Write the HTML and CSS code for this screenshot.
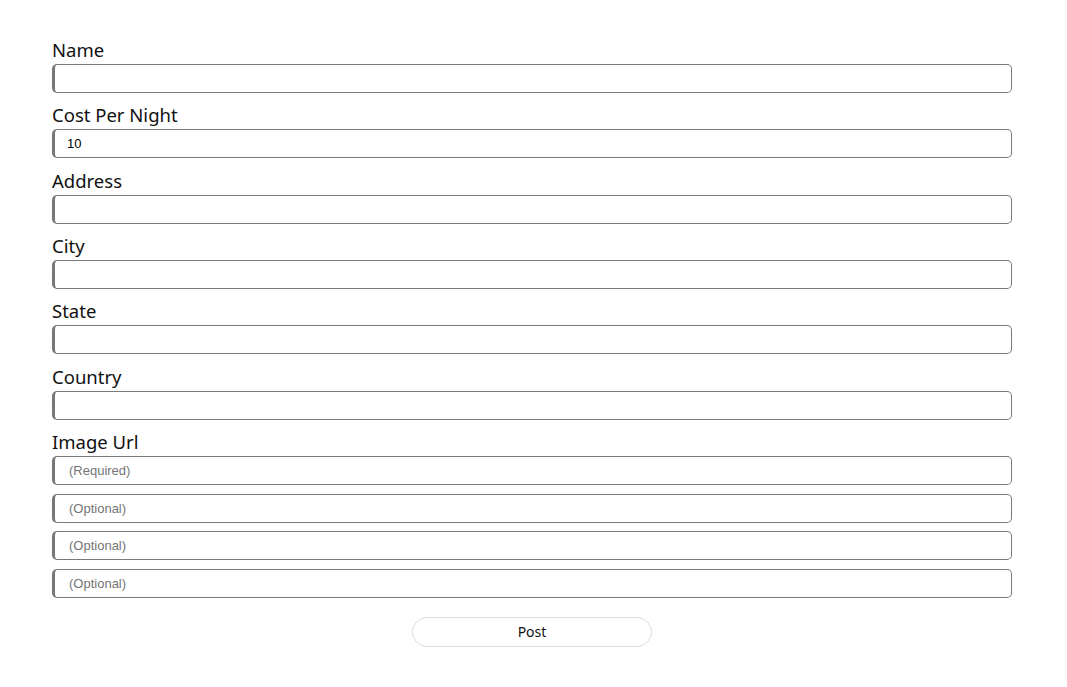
FILE: index.html
```html
<!DOCTYPE html>
<html>
<head>
<meta charset="utf-8">
<link rel="stylesheet" href="styles.css">
</head>
<body>
<form class="form">
  <label class="label">Name</label>
  <input class="field" type="text">
  <label class="label">Cost Per Night</label>
  <input class="field" type="text" value="10">
  <label class="label">Address</label>
  <input class="field" type="text">
  <label class="label">City</label>
  <input class="field" type="text">
  <label class="label">State</label>
  <input class="field" type="text">
  <label class="label">Country</label>
  <input class="field" type="text">
  <label class="label">Image Url</label>
  <div class="urls">
    <input class="field url" type="text" placeholder="(Required)">
    <input class="field url" type="text" placeholder="(Optional)">
    <input class="field url" type="text" placeholder="(Optional)">
    <input class="field url" type="text" placeholder="(Optional)">
  </div>
  <div class="actions">
    <button class="post" type="button">Post</button>
  </div>
</form>
</body>
</html>
```
FILE: styles.css
```css
html, body {
  margin: 0;
  padding: 0;
  background: #fff;
}
.form {
  width: 960px;
  margin: 0 0 0 52px;
  padding-top: 37px;
  display: flex;
  flex-direction: column;
}
.label {
  display: block;
  font-family: "Noto Sans", "Open Sans", sans-serif;
  font-size: 18.5px;
  line-height: 26px;
  color: #111;
  margin-top: 9.33px;
  margin-bottom: 1px;
}
.label:first-child {
  margin-top: 0;
}
.field {
  box-sizing: border-box;
  width: 960px;
  height: 29px;
  margin: 0;
  border: 1px solid #7a7a7a;
  border-left: 3px solid #777;
  border-radius: 5px;
  padding: 0 12px;
  font-family: "Liberation Sans", Arial, sans-serif;
  font-size: 13px;
  color: #000;
  background: #fff;
  outline: none;
}
.url {
  padding-left: 14px;
}
.field::placeholder {
  color: #757575;
}
.urls {
  display: flex;
  flex-direction: column;
  gap: 8.67px;
}
.actions {
  display: flex;
  justify-content: center;
  margin-top: 19px;
}
.post {
  width: 240px;
  height: 30px;
  border: 1px solid #ddd;
  border-radius: 15px;
  background: #fff;
  font-family: "Noto Sans", "Open Sans", sans-serif;
  font-size: 14px;
  color: #111;
  cursor: pointer;
}
```
